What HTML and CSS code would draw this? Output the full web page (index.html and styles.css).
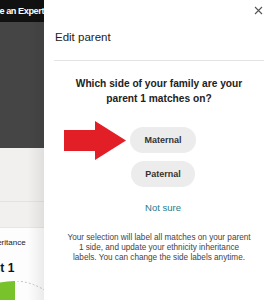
FILE: index.html
```html
<!DOCTYPE html>
<html lang="en">
<head>
<meta charset="utf-8">
<title>Edit parent</title>
<link rel="stylesheet" href="styles.css">
</head>
<body>
<div class="page">
  <header class="topbar"><span class="topbar-text">Hire an Expert</span></header>
  <section class="hero"></section>
  <section class="band"><div class="band-line"></div></section>
  <section class="card">
    <div class="card-sub">Ethnicity inheritance</div>
    <div class="card-title">Parent 1</div>
    <div class="chart">
      <svg width="60" height="24" viewBox="0 0 60 24">
        <path d="M-20 24 L-20 6 Q-4 1 15 0 L15 24 Z" fill="#78c22b"/>
        <path d="M17 0 Q32 1 46 10" fill="none" stroke="#c4c4c4" stroke-width="1" stroke-dasharray="2 2"/>
      </svg>
    </div>
  </section>
</div>
<div class="shade"></div>
<aside class="modal">
  <div class="modal-head">
    <h2 class="modal-title">Edit parent</h2>
    <button class="close" aria-label="Close">
      <svg width="9" height="9" viewBox="0 0 9 9"><path d="M1 1 L8 8 M8 1 L1 8" stroke="#555" stroke-width="1.1" fill="none"/></svg>
    </button>
  </div>
  <div class="modal-body">
    <p class="question">Which side of your family are your parent 1 matches on?</p>
    <div class="choices">
      <div class="choice-row">
        <svg class="arrow" width="63" height="40" viewBox="0 0 63 40"><path d="M0 9 H31 V0 L62 19.5 L31 39 V30 H0 Z" fill="#e21f26"/></svg>
        <button class="pill">Maternal</button>
      </div>
      <button class="pill">Paternal</button>
      <a class="link">Not sure</a>
    </div>
    <p class="note">Your selection will label all matches on your parent<br>1 side, and update your ethnicity inheritance<br>labels. You can change the side labels anytime.</p>
  </div>
</aside>
</body>
</html>
```
FILE: styles.css
```css
* { box-sizing: border-box; }
html, body { margin: 0; padding: 0; }
body {
  width: 274px;
  height: 300px;
  overflow: hidden;
  font-family: "Liberation Sans", Arial, sans-serif;
  background: #f2f0ee;
  position: relative;
}
.page { width: 274px; height: 300px; overflow: hidden; display: flex; flex-direction: column; }
.topbar {
  height: 22px;
  flex: none;
  background: #111;
  display: flex;
  align-items: center;
  justify-content: flex-end;
  padding-right: 230px;
  white-space: nowrap;
  overflow: hidden;
}
.topbar-text { color: #fff; font-weight: bold; font-size: 9.2px; letter-spacing: -0.45px; }
.hero { height: 126px; flex: none; background: #454545; }
.band { height: 79px; flex: none; background: #f2f0ee; padding-top: 53px; }
.band-line { height: 1px; background: #e4e2df; }
.card { background: #fdfdfd; flex: 1; padding-top: 10px; border-top: 1px solid #e8e6e3; overflow: hidden; }
.card-sub { font-size: 8px; color: #222; margin-left: -46px; white-space: nowrap; }
.card-title { font-size: 12px; font-weight: bold; color: #111; margin-left: -33px; margin-top: 14px; white-space: nowrap; }
.chart { margin-top: 6px; }
.chart svg { display: block; }
.shade {
  position: absolute;
  top: 0; left: 28px;
  width: 16px; height: 300px;
  background: linear-gradient(to right, rgba(0,0,0,0), rgba(0,0,0,0.07));
}
.modal {
  position: absolute;
  top: 0; left: 44px;
  width: 230px; height: 300px;
  background: #fff;
  display: flex;
  flex-direction: column;
}
.modal-head {
  margin: 0 10px;
  height: 61px;
  flex: none;
  border-bottom: 1px solid #e4e4e4;
  display: flex;
  align-items: center;
  justify-content: space-between;
  position: relative;
}
.modal-title { margin: 0; font-size: 11.5px; font-weight: normal; color: #222; padding-left: 1px; padding-top: 14px; }
.close {
  position: absolute; top: 6px; right: 1px;
  border: 0; background: none; padding: 0; width: 9px; height: 9px;
  display: flex;
}
.modal-body { display: flex; flex-direction: column; align-items: center; }
.question {
  margin: 15px 0 0;
  width: 190px;
  text-align: center;
  font-weight: bold;
  font-size: 10.2px;
  line-height: 15px;
  color: #222;
}
.choices {
  margin-top: 21px;
  display: flex;
  flex-direction: column;
  align-items: center;
  gap: 8px;
  padding-left: 8px;
}
.choice-row { position: relative; }
.arrow { position: absolute; left: -66px; top: -6px; }
.pill {
  border: 0;
  background: #ececec;
  border-radius: 13px;
  height: 26px;
  padding: 0 14px;
  font-family: inherit;
  font-weight: bold;
  font-size: 9px;
  color: #333;
}
.link { color: #1f7b8c; font-size: 9.5px; margin-top: 7px; }
.note {
  margin: 20px 0 0;
  text-align: center;
  white-space: nowrap;
  font-size: 8.2px;
  line-height: 10px;
  color: #444;
}
```
